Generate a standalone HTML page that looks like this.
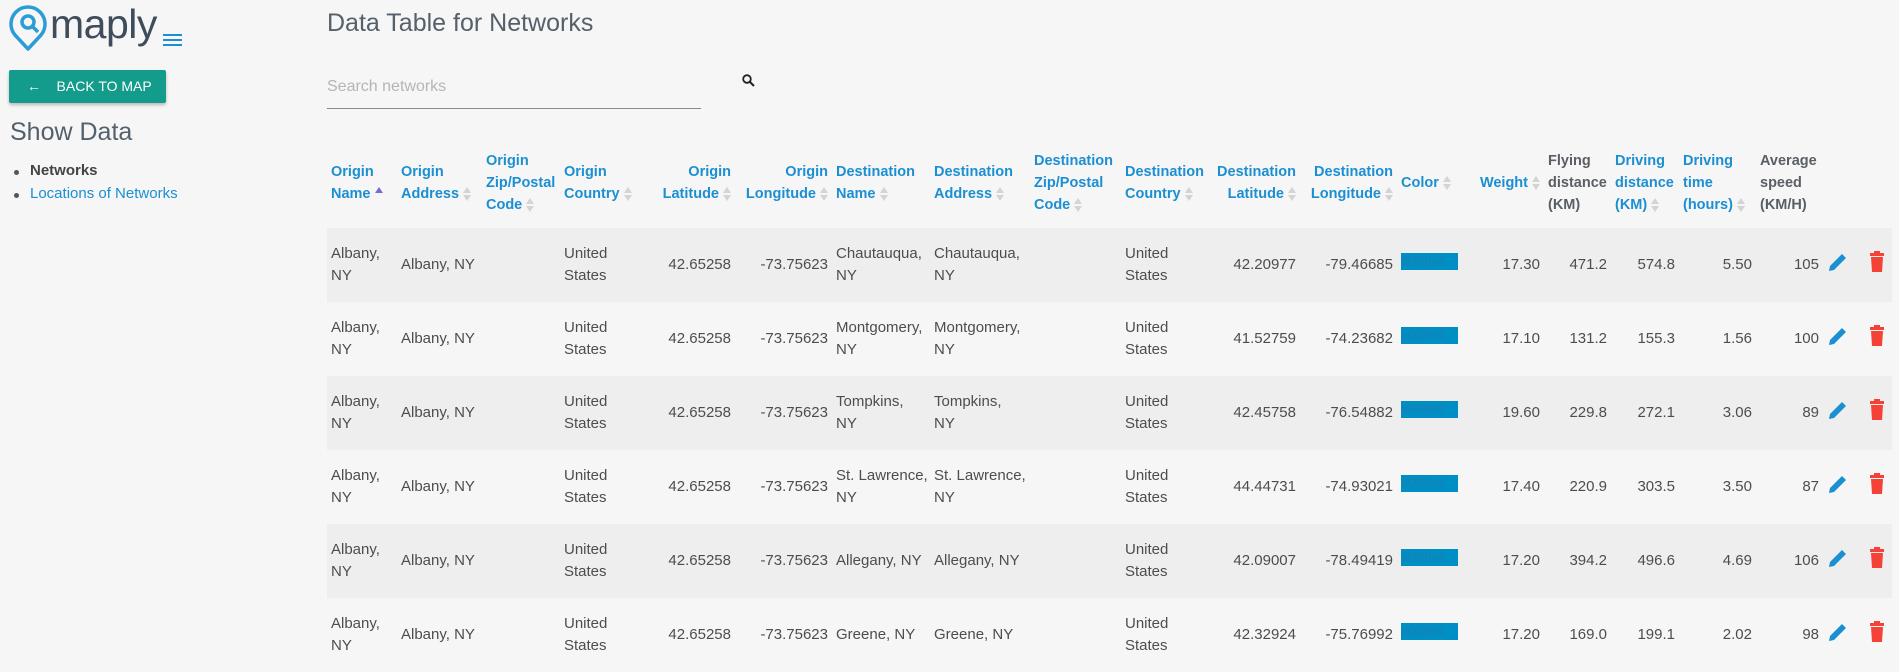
<!DOCTYPE html>
<html><head><meta charset="utf-8"><style>
*{box-sizing:border-box;margin:0;padding:0}
body{width:1899px;height:663px;overflow:hidden;background:#f6f6f6;font-family:"Liberation Sans",sans-serif;color:#4a4a4a;position:relative}
.abs{position:absolute}
.logo{font-size:41px;color:#3e4c5b;letter-spacing:-0.5px}
.btn{left:9px;top:70px;width:157px;height:33px;background:#139b8b;color:#fff;font-size:14px;line-height:33px;border-radius:2px;box-shadow:0 2px 3px rgba(0,0,0,.25);padding-left:18px}
.title{left:327px;top:9px;font-size:25px;color:#55606b}
.search{left:327px;top:76px;width:374px;height:33px;border-bottom:1px solid #8a8a8a;color:#b5b5b5;font-size:16px;padding-top:2px}
.show{left:10px;top:118px;font-size:25px;color:#55606b}
ul{position:absolute;left:14px;top:162px;font-size:15px;list-style:none}
ul li{height:23px;position:relative;padding-left:16px}
ul li:before{content:"";position:absolute;left:0;top:8px;width:5px;height:5px;border-radius:50%;background:#555}
table{position:absolute;left:327px;top:137px;border-collapse:collapse;table-layout:fixed;width:1565px;font-size:15px}
th{color:#1b8fd2;font-weight:bold;font-size:14.5px;text-align:left;vertical-align:middle;line-height:22px;padding:0 4px;height:91px}
th.g{color:#5a5f66}
th.r,td.r{text-align:right}
td{line-height:22px;padding:0 4px;height:74px;vertical-align:middle;color:#4d4d4d;white-space:nowrap}
tr.o td{background:#eeeeee}
.s{display:inline-block;width:8px;height:16px;position:relative;vertical-align:middle;margin-left:4px}
.s:before,.s:after{content:"";position:absolute;left:0;border-left:4px solid transparent;border-right:4px solid transparent}
.s:before{top:1px;border-bottom:6px solid #d4d4d4}
.s:after{bottom:1px;border-top:6px solid #d4d4d4}
.s.u:before{border-bottom-color:#7a6ad6}.s.u:after{border-top-color:transparent}
.sw{display:inline-block;width:57px;height:17px;background:#008fc4;color:#1a7fb0;font-size:12px;line-height:17px;overflow:hidden}
</style></head><body>
<div class="abs" style="left:8px;top:2px">
<svg width="40" height="50" viewBox="0 0 40 50"><path d="M20 47 L7 33 A17 17 0 1 1 33 33 Z" fill="none" stroke="#2b9cd6" stroke-width="3.5" stroke-linejoin="round"/><circle cx="20" cy="20" r="6" fill="none" stroke="#2b9cd6" stroke-width="3.5"/><path d="M24 24 L30 30" stroke="#2b9cd6" stroke-width="3.5"/></svg></div>
<div class="abs logo" style="left:50px;top:1px">maply</div>
<div class="abs" style="left:163px;top:34px;width:19px"><div style="height:2px;background:#1b8fd2;margin-bottom:3px"></div><div style="height:2px;background:#1b8fd2;margin-bottom:3px"></div><div style="height:2px;background:#1b8fd2"></div></div>
<div class="abs btn">←&nbsp;&nbsp;&nbsp;&nbsp;BACK TO MAP</div>
<div class="abs title">Data Table for Networks</div>
<div class="abs search">Search networks</div>
<svg class="abs" style="left:742px;top:74px" width="13" height="13" viewBox="0 0 13 13"><circle cx="5" cy="5" r="3.8" fill="none" stroke="#222" stroke-width="1.8"/><path d="M8 8 L12 12" stroke="#222" stroke-width="2"/></svg>
<div class="abs show">Show Data</div>
<ul><li style="color:#444;font-weight:bold">Networks</li><li style="color:#1b8fd2">Locations of Networks</li></ul>
<table>
<colgroup><col style="width:70px"><col style="width:85px"><col style="width:78px"><col style="width:80px"><col style="width:95px"><col style="width:97px"><col style="width:98px"><col style="width:100px"><col style="width:91px"><col style="width:79px"><col style="width:100px"><col style="width:97px"><col style="width:68px"><col style="width:79px"><col style="width:67px"><col style="width:68px"><col style="width:77px"><col style="width:67px"><col style="width:41px"><col style="width:28px"></colgroup>
<tr><th>Origin Name<span class="s u"></span></th><th>Origin Address<span class="s"></span></th><th>Origin Zip/Postal Code<span class="s"></span></th><th>Origin Country<span class="s"></span></th><th class="r">Origin Latitude<span class="s"></span></th><th class="r">Origin Longitude<span class="s"></span></th><th>Destination Name<span class="s"></span></th><th>Destination Address<span class="s"></span></th><th>Destination Zip/Postal Code<span class="s"></span></th><th>Destination Country<span class="s"></span></th><th class="r">Destination Latitude<span class="s"></span></th><th class="r">Destination Longitude<span class="s"></span></th><th>Color<span class="s"></span></th><th class="r">Weight<span class="s"></span></th><th class="g">Flying distance (KM)</th><th>Driving distance (KM)<span class="s"></span></th><th>Driving time (hours)<span class="s"></span></th><th class="g">Average speed (KM/H)</th><th></th><th></th></tr>
<tr class="o"><td>Albany,<br>NY</td><td>Albany, NY</td><td></td><td>United<br>States</td><td class="r">42.65258</td><td class="r">-73.75623</td><td>Chautauqua,<br>NY</td><td>Chautauqua,<br>NY</td><td></td><td>United<br>States</td><td class="r">42.20977</td><td class="r">-79.46685</td><td><span class="sw">#008fc4</span></td><td class="r">17.30</td><td class="r">471.2</td><td class="r">574.8</td><td class="r">5.50</td><td class="r">105</td><td><svg width="22" height="22" viewBox="0 0 22 22"><path d="M2 20 L3 15 L15 3 L19 7 L7 19 Z" fill="#1b8fd2"/></svg></td><td><svg width="18" height="22" viewBox="0 0 18 22"><rect x="2" y="2" width="14" height="3" fill="#f44336"/><rect x="6" y="0" width="6" height="3" fill="#f44336"/><path d="M3 6 H15 L14 21 H4 Z" fill="#f44336"/></svg></td></tr>
<tr><td>Albany,<br>NY</td><td>Albany, NY</td><td></td><td>United<br>States</td><td class="r">42.65258</td><td class="r">-73.75623</td><td>Montgomery,<br>NY</td><td>Montgomery,<br>NY</td><td></td><td>United<br>States</td><td class="r">41.52759</td><td class="r">-74.23682</td><td><span class="sw">#008fc4</span></td><td class="r">17.10</td><td class="r">131.2</td><td class="r">155.3</td><td class="r">1.56</td><td class="r">100</td><td><svg width="22" height="22" viewBox="0 0 22 22"><path d="M2 20 L3 15 L15 3 L19 7 L7 19 Z" fill="#1b8fd2"/></svg></td><td><svg width="18" height="22" viewBox="0 0 18 22"><rect x="2" y="2" width="14" height="3" fill="#f44336"/><rect x="6" y="0" width="6" height="3" fill="#f44336"/><path d="M3 6 H15 L14 21 H4 Z" fill="#f44336"/></svg></td></tr>
<tr class="o"><td>Albany,<br>NY</td><td>Albany, NY</td><td></td><td>United<br>States</td><td class="r">42.65258</td><td class="r">-73.75623</td><td>Tompkins,<br>NY</td><td>Tompkins,<br>NY</td><td></td><td>United<br>States</td><td class="r">42.45758</td><td class="r">-76.54882</td><td><span class="sw">#008fc4</span></td><td class="r">19.60</td><td class="r">229.8</td><td class="r">272.1</td><td class="r">3.06</td><td class="r">89</td><td><svg width="22" height="22" viewBox="0 0 22 22"><path d="M2 20 L3 15 L15 3 L19 7 L7 19 Z" fill="#1b8fd2"/></svg></td><td><svg width="18" height="22" viewBox="0 0 18 22"><rect x="2" y="2" width="14" height="3" fill="#f44336"/><rect x="6" y="0" width="6" height="3" fill="#f44336"/><path d="M3 6 H15 L14 21 H4 Z" fill="#f44336"/></svg></td></tr>
<tr><td>Albany,<br>NY</td><td>Albany, NY</td><td></td><td>United<br>States</td><td class="r">42.65258</td><td class="r">-73.75623</td><td>St. Lawrence,<br>NY</td><td>St. Lawrence,<br>NY</td><td></td><td>United<br>States</td><td class="r">44.44731</td><td class="r">-74.93021</td><td><span class="sw">#008fc4</span></td><td class="r">17.40</td><td class="r">220.9</td><td class="r">303.5</td><td class="r">3.50</td><td class="r">87</td><td><svg width="22" height="22" viewBox="0 0 22 22"><path d="M2 20 L3 15 L15 3 L19 7 L7 19 Z" fill="#1b8fd2"/></svg></td><td><svg width="18" height="22" viewBox="0 0 18 22"><rect x="2" y="2" width="14" height="3" fill="#f44336"/><rect x="6" y="0" width="6" height="3" fill="#f44336"/><path d="M3 6 H15 L14 21 H4 Z" fill="#f44336"/></svg></td></tr>
<tr class="o"><td>Albany,<br>NY</td><td>Albany, NY</td><td></td><td>United<br>States</td><td class="r">42.65258</td><td class="r">-73.75623</td><td>Allegany, NY</td><td>Allegany, NY</td><td></td><td>United<br>States</td><td class="r">42.09007</td><td class="r">-78.49419</td><td><span class="sw">#008fc4</span></td><td class="r">17.20</td><td class="r">394.2</td><td class="r">496.6</td><td class="r">4.69</td><td class="r">106</td><td><svg width="22" height="22" viewBox="0 0 22 22"><path d="M2 20 L3 15 L15 3 L19 7 L7 19 Z" fill="#1b8fd2"/></svg></td><td><svg width="18" height="22" viewBox="0 0 18 22"><rect x="2" y="2" width="14" height="3" fill="#f44336"/><rect x="6" y="0" width="6" height="3" fill="#f44336"/><path d="M3 6 H15 L14 21 H4 Z" fill="#f44336"/></svg></td></tr>
<tr><td>Albany,<br>NY</td><td>Albany, NY</td><td></td><td>United<br>States</td><td class="r">42.65258</td><td class="r">-73.75623</td><td>Greene, NY</td><td>Greene, NY</td><td></td><td>United<br>States</td><td class="r">42.32924</td><td class="r">-75.76992</td><td><span class="sw">#008fc4</span></td><td class="r">17.20</td><td class="r">169.0</td><td class="r">199.1</td><td class="r">2.02</td><td class="r">98</td><td><svg width="22" height="22" viewBox="0 0 22 22"><path d="M2 20 L3 15 L15 3 L19 7 L7 19 Z" fill="#1b8fd2"/></svg></td><td><svg width="18" height="22" viewBox="0 0 18 22"><rect x="2" y="2" width="14" height="3" fill="#f44336"/><rect x="6" y="0" width="6" height="3" fill="#f44336"/><path d="M3 6 H15 L14 21 H4 Z" fill="#f44336"/></svg></td></tr>
</table>
</body></html>
